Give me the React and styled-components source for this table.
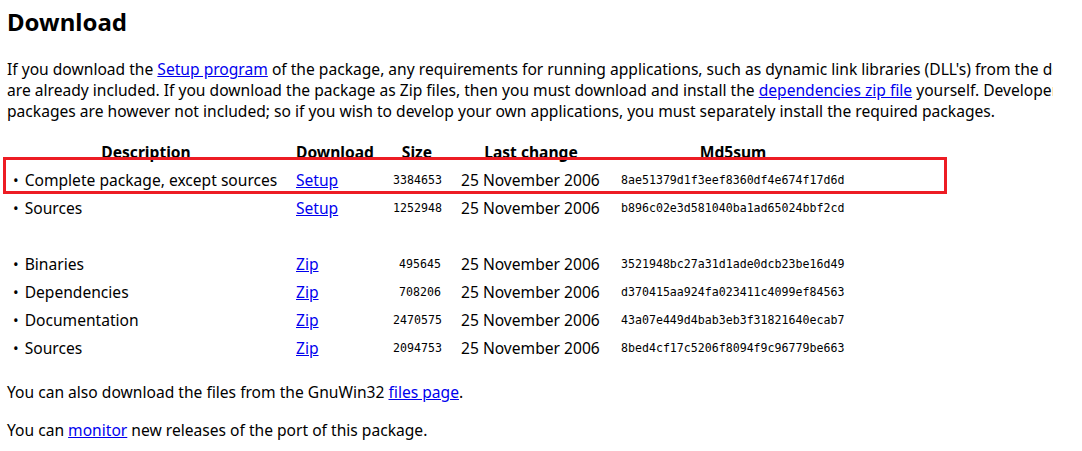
import styled, { createGlobalStyle } from "styled-components";

const GlobalStyle = createGlobalStyle`
  html, body {
    margin: 0;
    padding: 0;
    background: #ffffff;
  }
  body {
    font-family: "Noto Sans", "Open Sans", sans-serif;
    color: #000000;
  }
`;

const Page = styled.div`
  width: 1045px;
  padding-left: 8px;
  overflow: hidden;
`;

const Title = styled.h2`
  font-size: 24px;
  font-weight: 700;
  margin: 5px 0 0 -1px;
  line-height: 34px;
`;

const Para = styled.p`
  font-size: 15.6px;
  line-height: 21px;
  margin: ${p => p.$top || 16}px 0 0 -1px;
  white-space: nowrap;
`;

const A = styled.a`
  color: #0000ee;
  text-decoration: underline;
`;

const TableWrap = styled.div`
  position: relative;
  margin-top: 16px;
`;

const Grid = styled.div`
  display: grid;
  grid-template-columns: 276px 102px 62px 166px 238px;
  grid-auto-rows: 28px;
  align-items: center;
`;

const Head = styled.div`
  font-weight: 700;
  font-size: 15.6px;
  text-align: ${p => p.$align || "center"};
  padding-left: ${p => p.$pl || 0}px;
  line-height: 18px;
`;

const Desc = styled.div`
  font-size: 15.6px;
  padding-left: 5px;
  display: flex;
  align-items: center;
  gap: 6px;
  white-space: nowrap;
`;

const Bullet = styled.span`
  font-size: 15px;
`;

const LinkCell = styled.div`
  font-size: 15.6px;
  padding-left: 12px;
`;

const Mono = styled.div`
  font-family: "DejaVu Sans Mono", "Liberation Mono", monospace;
  font-size: 11.6px;
  text-align: ${p => p.$align || "left"};
  padding: 0 7px;
`;

const DateCell = styled.div`
  font-size: 15.6px;
  padding-left: 13px;
  white-space: nowrap;
`;

const Blank = styled.div`
  grid-column: 1 / -1;
`;

const Highlight = styled.div`
  position: absolute;
  left: -5px;
  top: 19px;
  width: 938px;
  height: 31px;
  border: 3px solid #ed1c24;
  pointer-events: none;
`;

const rows = [
  { d: "Complete package, except sources", l: "Setup", s: "3384653", m: "8ae51379d1f3eef8360df4e674f17d6d" },
  { d: "Sources", l: "Setup", s: "1252948", m: "b896c02e3d581040ba1ad65024bbf2cd" },
  null,
  { d: "Binaries", l: "Zip", s: "495645", m: "3521948bc27a31d1ade0dcb23be16d49" },
  { d: "Dependencies", l: "Zip", s: "708206", m: "d370415aa924fa023411c4099ef84563" },
  { d: "Documentation", l: "Zip", s: "2470575", m: "43a07e449d4bab3eb3f31821640ecab7" },
  { d: "Sources", l: "Zip", s: "2094753", m: "8bed4cf17c5206f8094f9c96779be663" },
];

export default function App() {
  return (
    <>
      <GlobalStyle />
      <Page>
        <Title>Download</Title>
        <Para $top={20}>
          If you download the <A href="#">Setup program</A> of the package, any requirements for running applications, such as dynamic link libraries (DLL's) from the dependency list below,
          <br />
          are already included. If you download the package as Zip files, then you must download and install the <A href="#">dependencies zip file</A> yourself. Developer files (header files and libraries) from other
          <br />
          packages are however not included; so if you wish to develop your own applications, you must separately install the required packages.
        </Para>
        <TableWrap>
          <Grid>
            <Head>Description</Head>
            <Head $align="left" $pl={12}>Download</Head>
            <Head>Size</Head>
            <Head>Last change</Head>
            <Head>Md5sum</Head>
            {rows.map((r, i) =>
              r ? (
                <>
                  <Desc key={`d${i}`}>
                    <Bullet>•</Bullet>
                    {r.d}
                  </Desc>
                  <LinkCell key={`l${i}`}>
                    <A href="#">{r.l}</A>
                  </LinkCell>
                  <Mono key={`s${i}`} $align="right">{r.s}</Mono>
                  <DateCell key={`t${i}`}>25 November 2006</DateCell>
                  <Mono key={`m${i}`}>{r.m}</Mono>
                </>
              ) : (
                <Blank key={`b${i}`} />
              )
            )}
          </Grid>
          <Highlight />
        </TableWrap>
        <Para $top={20}>
          You can also download the files from the GnuWin32 <A href="#">files page</A>.
        </Para>
        <Para $top={17}>
          You can <A href="#">monitor</A> new releases of the port of this package.
        </Para>
      </Page>
    </>
  );
}
